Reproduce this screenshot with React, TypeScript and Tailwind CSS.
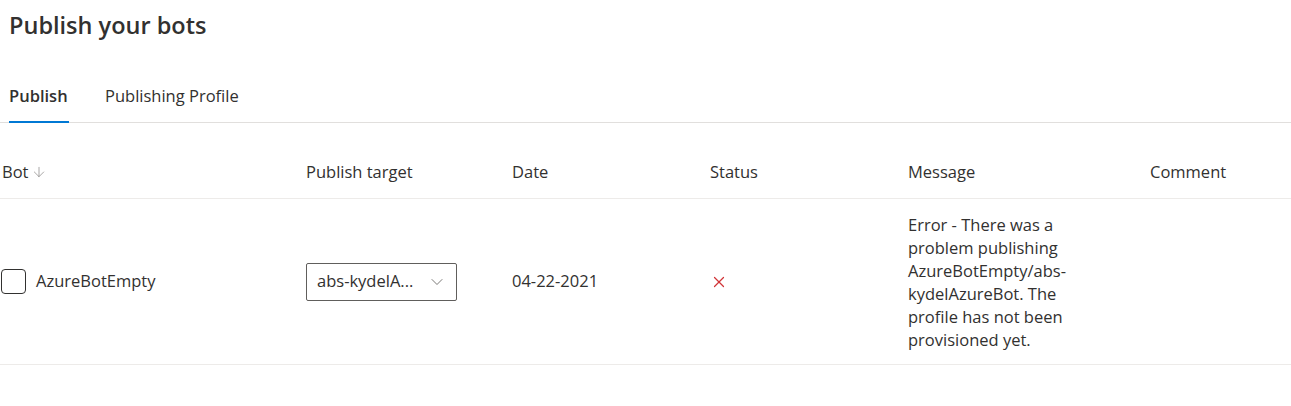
import React from 'react';
import { ChevronDown, X, ArrowDown } from 'lucide-react';

const columns = [
  { label: 'Bot', width: 'w-[306px]', sort: true },
  { label: 'Publish target', width: 'w-[206px]' },
  { label: 'Date', width: 'w-[198px]' },
  { label: 'Status', width: 'w-[198px]' },
  { label: 'Message', width: 'w-[242px]' },
  { label: 'Comment', width: 'flex-1' },
];

export default function App() {
  return (
    <div className="w-[1291px] h-[406px] bg-white text-[#323130] overflow-hidden" style={{ fontFamily: '"Open Sans", "Noto Sans", sans-serif' }}>
      {/* Title */}
      <h1 className="pl-[9px] pt-[8px] h-[56px] text-[23.5px] font-semibold leading-[34px]">Publish your bots</h1>

      {/* Tabs */}
      <div className="flex items-end h-[67px] border-b border-[#e1dfdd]">
        <div className="ml-[9px] flex flex-col">
          <span className="text-[16.5px] font-semibold leading-[20px] pb-[15px]">Publish</span>
          <div className="h-[2px] bg-[#0078d4] w-[60px] mb-[-1px]" />
        </div>
        <div className="ml-[36px] flex flex-col">
          <span className="text-[16.5px] leading-[20px] pb-[16px]">Publishing Profile</span>
        </div>
      </div>

      {/* Table */}
      <div className="mt-[26px]">
        <div className="flex items-center h-[50px] pb-[3px] border-b border-[#edebe9] text-[16.5px]">
          {columns.map((c, i) => (
            <div key={c.label} className={`${c.width} flex items-center ${i === 0 ? 'pl-[2px]' : ''}`}>
              <span>{c.label}</span>
              {c.sort && <ArrowDown className="w-[16px] h-[18px] ml-[3px] text-[#8a8886]" strokeWidth={1.1} />}
            </div>
          ))}
        </div>

        <div className="flex items-center h-[166px] border-b border-[#edebe9] text-[16.5px]">
          <div className="w-[306px] flex items-center pl-[1px]">
            <div className="w-[25px] h-[25px] border border-[#323130] rounded-[4px]" />
            <span className="ml-[10px]">AzureBotEmpty</span>
          </div>
          <div className="w-[206px]">
            <div className="w-[151px] h-[38px] border border-[#605e5c] rounded-[2px] flex items-center justify-between pl-[10px] pr-[9px]">
              <span>abs-kydelA...</span>
              <ChevronDown className="w-[20px] h-[20px] text-[#605e5c]" strokeWidth={1} />
            </div>
          </div>
          <div className="w-[198px]">04-22-2021</div>
          <div className="w-[198px]">
            <X className="w-[18px] h-[18px] text-[#d13438]" strokeWidth={1.6} />
          </div>
          <div className="w-[242px]">
            <p className="w-[172px] leading-[23px]">
              Error - There was a problem publishing AzureBotEmpty/abs-kydelAzureBot. The profile has not been provisioned yet.
            </p>
          </div>
          <div className="flex-1" />
        </div>
      </div>
    </div>
  );
}
